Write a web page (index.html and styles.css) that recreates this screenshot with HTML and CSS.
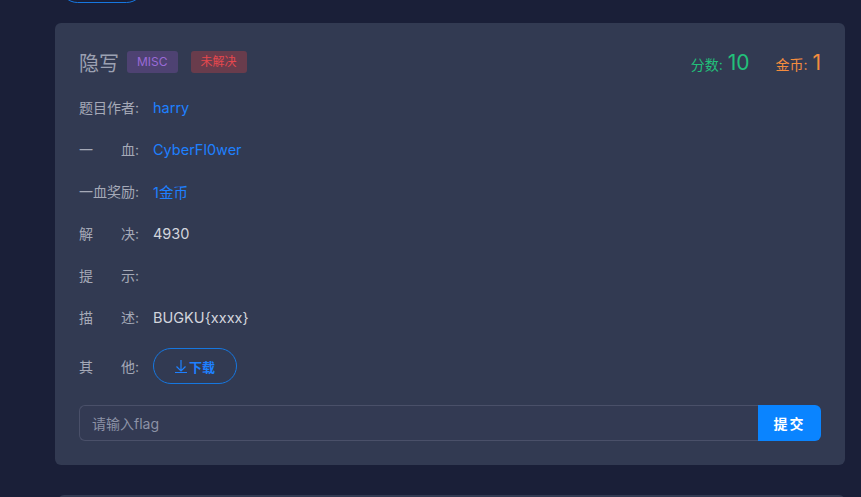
FILE: index.html
```html
<!DOCTYPE html>
<html lang="zh-CN">
  <head>
    <meta charset="UTF-8" />
    <meta name="viewport" content="width=device-width, initial-scale=1.0" />
    <title>隐写</title>
    <link rel="stylesheet" href="styles.css">
  </head>
  <body>
    <div class="page">
      <div class="prev-bar">
        <button class="pill-btn prev-btn"></button>
      </div>

      <div class="card">
        <div class="card-head">
          <div class="title-wrap">
            <span class="title">隐写</span>
            <span class="tag tag-type">MISC</span>
            <span class="tag tag-status">未解决</span>
          </div>
          <div class="stats">
            <span class="stat stat-score">分数: <b>10</b></span>
            <span class="stat stat-coin">金币: <b>1</b></span>
          </div>
        </div>

        <div class="info-row">
          <span class="label">题目作者:</span>
          <span class="value link">harry</span>
        </div>
        <div class="info-row">
          <span class="label">一　　血:</span>
          <span class="value link">CyberFl0wer</span>
        </div>
        <div class="info-row">
          <span class="label">一血奖励:</span>
          <span class="value link">1金币</span>
        </div>
        <div class="info-row">
          <span class="label">解　　决:</span>
          <span class="value">4930</span>
        </div>
        <div class="info-row">
          <span class="label">提　　示:</span>
          <span class="value"></span>
        </div>
        <div class="info-row">
          <span class="label">描　　述:</span>
          <span class="value">BUGKU{xxxx}</span>
        </div>
        <div class="info-row row-tall">
          <span class="label">其　　他:</span>
          <button class="pill-btn download-btn">
            <svg class="dl-icon" width="12" height="14" viewBox="0 0 12 14">
              <path d="M6 1 V12 M1.5 7.5 L6 12 L10.5 7.5 M0 13.5 H12" fill="none" stroke="currentColor" stroke-width="1.2" />
            </svg>下载
          </button>
        </div>

        <div class="flag-form">
          <input type="text" class="flag-input" placeholder="请输入flag" />
          <button class="submit-btn">提交</button>
        </div>
      </div>

      <div class="card next-card"></div>
    </div>
  </body>
</html>
```

FILE: styles.css
```css
html,
body {
  margin: 0;
  padding: 0;
  background-color: #1a1f38;
  overflow: hidden;
}
body {
  font-family: "Inter", "Noto Sans CJK SC", sans-serif;
  font-size: 14px;
  color: #a5a9b7;
}
.page {
  width: 790px;
  margin-left: 55px;
  height: 497px;
  overflow: hidden;
}
.prev-bar {
  margin-top: -32px;
  padding-left: 5px;
}
.pill-btn {
  background: transparent;
  border: 1px solid #1677e0;
  border-radius: 18px;
  font-family: inherit;
  cursor: pointer;
}
.prev-btn {
  width: 84px;
  height: 35px;
  display: block;
}
.card {
  background-color: #323a52;
  border-radius: 6px;
  margin-top: 20px;
  padding: 24px;
}
.card-head {
  display: flex;
  justify-content: space-between;
  align-items: center;
  height: 30px;
  margin-bottom: 9px;
}
.title-wrap {
  display: flex;
  align-items: center;
}
.title {
  font-size: 20px;
  color: #9ca1b2;
  margin-right: 8px;
}
.tag {
  display: inline-block;
  height: 22px;
  line-height: 22px;
  padding: 0 10px;
  border-radius: 3px;
  font-size: 12px;
  margin-right: 13px;
}
.tag-type {
  background-color: #4e4272;
  color: #9a6ad6;
}
.tag-status {
  background-color: #693c4c;
  color: #e6484e;
}
.stats {
  display: flex;
  align-items: baseline;
  gap: 26px;
}
.stat {
  font-size: 14px;
}
.stat b {
  font-size: 21px;
  font-weight: normal;
  margin-left: 1px;
}
.stat-score {
  color: #22c07a;
}
.stat-coin {
  color: #f48c3e;
}
.info-row {
  display: flex;
  align-items: center;
  height: 42px;
}
.row-tall {
  height: 56px;
}
.label {
  width: 74px;
  flex-shrink: 0;
  white-space: pre;
  color: #a5a9b7;
}
.value {
  color: #d2d5dd;
  font-size: 14.5px;
}
.link {
  color: #1e80ff;
}
.download-btn {
  width: 84px;
  height: 36px;
  color: #1e80ff;
  font-size: 13px;
  font-weight: bold;
  display: flex;
  align-items: center;
  justify-content: center;
  padding: 0;
}
.dl-icon {
  margin-right: 2px;
}
.flag-form {
  display: flex;
  margin-top: 11px;
  height: 36px;
}
.flag-input {
  flex: 1;
  background-color: #333a53;
  border: 1px solid #4a5069;
  border-right: none;
  border-radius: 6px 0 0 6px;
  padding: 0 12px;
  font-family: inherit;
  font-size: 14px;
  color: #d2d5dd;
  outline: none;
}
.flag-input::placeholder {
  color: #8c92a6;
}
.submit-btn {
  width: 63px;
  border: none;
  background-color: #0a84ff;
  color: #fff;
  font-family: inherit;
  font-size: 14px;
  font-weight: bold;
  letter-spacing: 2px;
  border-radius: 0 6px 6px 0;
  cursor: pointer;
}
.next-card {
  margin-top: 30px;
  height: 40px;
  padding: 0;
  margin-left: 3px;
}
```
